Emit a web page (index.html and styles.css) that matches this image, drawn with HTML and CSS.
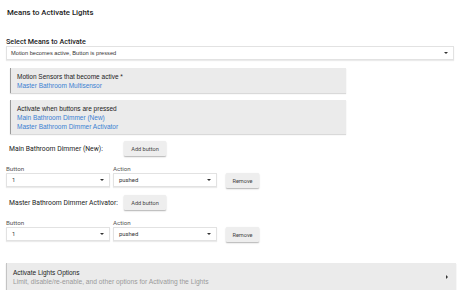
FILE: index.html
```html
<!DOCTYPE html>
<html>
<head>
<meta charset="utf-8">
<link rel="stylesheet" href="styles.css">
</head>
<body>
<div class="page">
  <div class="title">Means to Activate Lights</div>
  <div class="field">
    <div class="label">Select Means to Activate</div>
    <div class="select wide"><span>Motion becomes active, Button is pressed</span><span class="caret"></span></div>
  </div>
  <div class="info">
    <div class="info-head">Motion Sensors that become active *</div>
    <div class="link">Master Bathroom Multisensor</div>
  </div>
  <div class="info">
    <div class="info-head">Activate when buttons are pressed</div>
    <div class="link">Main Bathroom Dimmer (New)</div>
    <div class="link">Master Bathroom Dimmer Activator</div>
  </div>
  <div class="device">
    <div class="device-row">
      <span class="device-name">Main Bathroom Dimmer (New):</span>
      <span class="btn add">Add button</span>
    </div>
    <div class="pair">
      <div class="col">
        <div class="small-label">Button</div>
        <div class="select sm"><span>1</span><span class="caret"></span></div>
      </div>
      <div class="col">
        <div class="small-label">Action</div>
        <div class="select sm"><span>pushed</span><span class="caret"></span></div>
      </div>
      <span class="btn remove">Remove</span>
    </div>
  </div>
  <div class="device second">
    <div class="device-row">
      <span class="device-name">Master Bathroom Dimmer Activator:</span>
      <span class="btn add">Add button</span>
    </div>
    <div class="pair">
      <div class="col">
        <div class="small-label">Button</div>
        <div class="select sm"><span>1</span><span class="caret"></span></div>
      </div>
      <div class="col">
        <div class="small-label">Action</div>
        <div class="select sm"><span>pushed</span><span class="caret"></span></div>
      </div>
      <span class="btn remove">Remove</span>
    </div>
  </div>
  <div class="options">
    <div>
      <div class="opt-title">Activate Lights Options</div>
      <div class="opt-sub">Limit, disable/re-enable, and other options for Activating the Lights</div>
    </div>
    <span class="tri"></span>
  </div>
</div>
</body>
</html>
```
FILE: styles.css
```css
html, body {
  margin: 0;
  padding: 0;
  background: #ffffff;
}
.page {
  width: 448px;
  padding: 7px 0 0 6px;
  font-family: Roboto, "Liberation Sans", sans-serif;
  color: #222;
}
.title {
  font-size: 7.8px;
  font-weight: 500;
  padding-left: 1px;
  height: 11px;
  line-height: 11px;
}
.field {
  margin-top: 19px;
}
.label {
  font-size: 7.2px;
  font-weight: 500;
  line-height: 9px;
  height: 9px;
}
.select {
  box-sizing: border-box;
  display: flex;
  align-items: center;
  justify-content: space-between;
  background: #fff;
  border: 1px solid #e2e2e2;
  box-shadow: 0 1px 1px rgba(0,0,0,0.08);
  padding: 0 5px 0 5px;
  font-size: 6px;
  color: #333;
}
.select.wide {
  height: 14px;
  font-family: "Liberation Sans", Arial, sans-serif;
  font-size: 5.7px;
  padding-left: 4px;
}
.caret {
  width: 0;
  height: 0;
  border-left: 2px solid transparent;
  border-right: 2px solid transparent;
  border-top: 2px solid #333;
}
.info {
  margin: 8px 0 0 4px;
  width: 336px;
  box-sizing: border-box;
  background: #ebebeb;
  border-left: 1px solid #9a9a9a;
  box-shadow: 0 1px 1px rgba(0,0,0,0.15);
  padding: 4px 8px 3px 6px;
  font-family: "Liberation Sans", Arial, sans-serif;
  font-size: 6.5px;
  line-height: 9px;
}
.info + .info {
  margin-top: 7px;
}
.info-head {
  color: #222;
}
.link {
  color: #3a7fd2;
}
.device {
  margin-top: 7px;
}
.device.second {
  margin-top: 8px;
}
.device-row {
  display: flex;
  align-items: center;
  height: 15px;
}
.device-name {
  width: 118px;
  padding-left: 3px;
  box-sizing: border-box;
  font-size: 6.8px;
  color: #222;
}
.btn {
  display: inline-flex;
  align-items: center;
  justify-content: center;
  background: #eeeeee;
  box-shadow: 0 1px 1.5px rgba(0,0,0,0.3);
  border-radius: 1px;
  font-size: 5.6px;
  color: #444;
  height: 15px;
}
.add {
  width: 42px;
}
.pair {
  display: flex;
  align-items: flex-end;
  margin-top: 9px;
}
.col {
  width: 104px;
  margin-right: 3px;
}
.small-label {
  font-size: 6.2px;
  color: #555;
  line-height: 8px;
}
.select.sm {
  height: 14px;
  font-size: 5.9px;
}
.remove {
  width: 33px;
  margin-left: 6px;
  margin-bottom: -1px;
}
.options {
  margin-top: 22px;
  width: 450px;
  height: 27px;
  box-sizing: border-box;
  background: #ebebeb;
  border-left: 1px solid #c4c4c4;
  box-shadow: 0 1px 1px rgba(0,0,0,0.2);
  display: flex;
  align-items: center;
  justify-content: space-between;
  padding: 0 8px 0 6px;
  font-family: "Liberation Sans", Arial, sans-serif;
}
.opt-title {
  font-size: 6.5px;
  line-height: 9px;
  color: #222;
}
.opt-sub {
  font-size: 6.7px;
  line-height: 9px;
  color: #9a9a9a;
}
.tri {
  width: 0;
  height: 0;
  border-top: 2px solid transparent;
  border-bottom: 2px solid transparent;
  border-left: 2.5px solid #333;
}
```
